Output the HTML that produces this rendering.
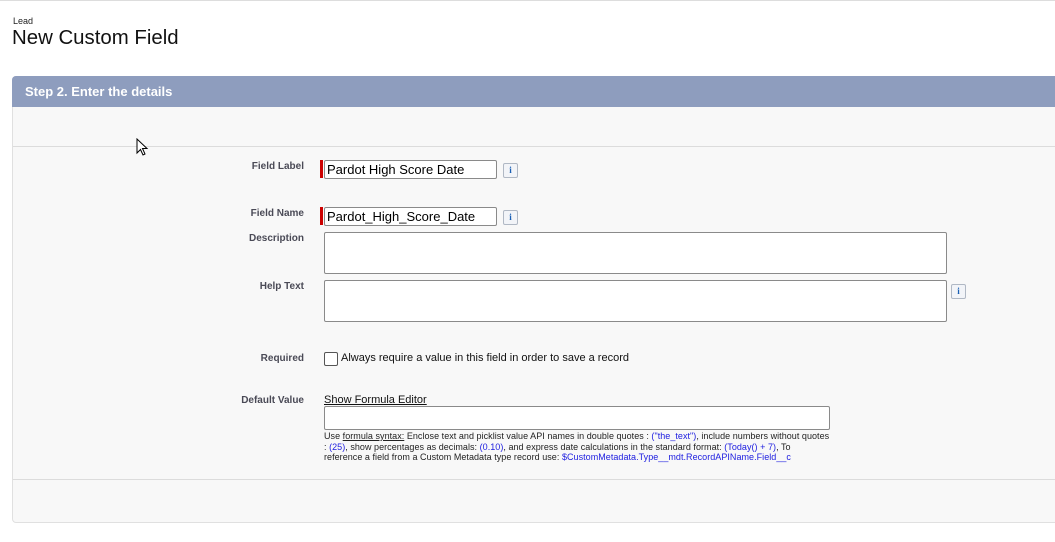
<!DOCTYPE html>
<html><head><style>
body{margin:0;width:1055px;height:542px;background:#fff;font-family:"Liberation Sans",Arial,sans-serif;position:relative;overflow:hidden}
.a{position:absolute}
.lbl{position:absolute;right:751px;font-size:10px;font-weight:bold;color:#4a4a56;text-align:right;white-space:nowrap}
.inp{position:absolute;border:1px solid #8a8a8a;border-radius:2px;background:#fff;font-size:13px;color:#000;box-sizing:border-box;padding:1px 2px;line-height:15px}
.req{position:absolute;width:3px;height:18px;background:#c00}
.info{position:absolute;width:13px;height:13px;border:1px solid #b0b8c4;border-radius:2px;background:#f2f4f8;font-size:9px;font-weight:bold;color:#1a5fb4;text-align:center;line-height:13px;font-family:"Liberation Serif",serif}
.b{color:#2020e0}
</style></head><body>
<div class="a" style="left:0;top:0;width:1055px;height:1px;background:#ddd"></div>
<div class="a" style="left:13px;top:16px;font-size:9px;color:#222">Lead</div>
<div class="a" style="left:12px;top:27px;font-size:20.4px;color:#111">New Custom Field</div>
<div class="a" style="left:12px;top:76px;width:1050px;height:447px;background:#f8f8f8;border:1px solid #e0e0e0;border-radius:4px 0 0 4px;box-sizing:border-box"></div>
<div class="a" style="left:12px;top:76px;width:1043px;height:31px;background:#8e9dbe;border-radius:4px 0 0 0"></div>
<div class="a" style="left:25px;top:84px;font-size:13px;font-weight:bold;color:#fff">Step 2. Enter the details</div>
<div class="a" style="left:13px;top:146px;width:1042px;height:1px;background:#dcdcdc"></div>
<div class="a" style="left:13px;top:479px;width:1042px;height:1px;background:#dcdcdc"></div>
<svg class="a" style="left:136px;top:138px" width="14" height="20"><path d="M1 1 L1 15 L4.5 11.5 L7 17 L9 16 L6.5 10.5 L11 10.5 Z" fill="#fff" stroke="#000" stroke-width="1"/></svg>

<div class="lbl" style="top:161px">Field Label</div>
<div class="req" style="left:320px;top:160px"></div>
<div class="inp" style="left:324px;top:160px;width:173px;height:19px">Pardot High Score Date</div>
<div class="info" style="left:503px;top:163px">i</div>

<div class="lbl" style="top:208px">Field Name</div>
<div class="req" style="left:320px;top:207px"></div>
<div class="inp" style="left:324px;top:207px;width:173px;height:19px">Pardot_High_Score_Date</div>
<div class="info" style="left:503px;top:210px">i</div>

<div class="lbl" style="top:233px">Description</div>
<div class="inp" style="left:324px;top:232px;width:623px;height:42px"></div>

<div class="lbl" style="top:281px">Help Text</div>
<div class="inp" style="left:324px;top:280px;width:623px;height:42px"></div>
<div class="info" style="left:951px;top:284px">i</div>

<div class="lbl" style="top:353px">Required</div>
<div class="a" style="left:324px;top:352px;width:12px;height:12px;border:1px solid #555;border-radius:2px;background:#fff"></div>
<div class="a" style="left:341px;top:352px;font-size:11px;color:#111">Always require a value in this field in order to save a record</div>

<div class="lbl" style="top:395px">Default Value</div>
<div class="a" style="left:324px;top:394px;font-size:11px;color:#111;text-decoration:underline">Show Formula Editor</div>
<div class="inp" style="left:324px;top:406px;width:506px;height:24px"></div>
<div class="a" style="left:324px;top:431px;white-space:nowrap;font-size:9px;line-height:10.5px;color:#222;letter-spacing:0.04px">Use <u>formula syntax:</u> Enclose text and picklist value API names in double quotes : <span class="b">("the_text")</span>, include numbers without quotes<br>: <span class="b">(25)</span>, show percentages as decimals: <span class="b">(0.10)</span>, and express date calculations in the standard format: <span class="b">(Today() + 7)</span>, To<br>reference a field from a Custom Metadata type record use: <span class="b">$CustomMetadata.Type__mdt.RecordAPIName.Field__c</span></div>
</body></html>
